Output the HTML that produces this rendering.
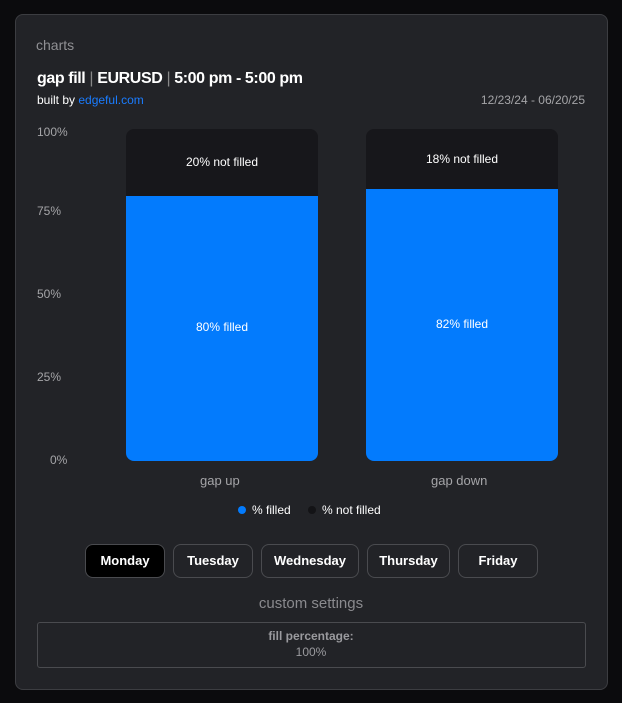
<!DOCTYPE html>
<html><head><style>
*{margin:0;padding:0;box-sizing:border-box}
body{width:622px;height:703px;background:#0b0b0d;font-family:"Liberation Sans",sans-serif;position:relative;overflow:hidden}
.card{position:absolute;left:15px;top:14px;width:593px;height:676px;background:#222327;border:1px solid #3c3d41;border-radius:8px}
.a{position:absolute;white-space:nowrap}
.yl{position:absolute;left:37px;font-size:12px;color:#a5a5a8}
.bar{position:absolute;border-radius:8px;overflow:hidden;background:#17171b}
.bar .b{position:absolute;left:0;right:0;bottom:0;background:#037bfd}
.t{position:absolute;left:0;right:0;text-align:center;color:#fff;font-size:12px}
.btn{position:absolute;top:544px;height:34px;border:1px solid #4a4b4f;border-radius:8px;color:#fff;font-size:13px;font-weight:bold;text-align:center;line-height:32px}
</style></head><body>
<div class="card"></div>
<div class="a" style="left:36px;top:37px;font-size:14px;color:#909094">charts</div>
<div class="a" style="left:37px;top:70px;font-size:16px;font-weight:bold;color:#fff;letter-spacing:-0.4px">gap fill <span style="color:#888;font-weight:normal">|</span> EURUSD <span style="color:#888;font-weight:normal">|</span> 5:00 pm - 5:00 pm</div>
<div class="a" style="left:37px;top:93px;font-size:12px;color:#fff">built by <span style="color:#1a7cff">edgeful.com</span></div>
<div class="a" style="right:37px;top:93px;font-size:12px;color:#a5a5a8">12/23/24 - 06/20/25</div>
<div class="yl" style="top:125px">100%</div>
<div class="yl" style="top:204px">75%</div>
<div class="yl" style="top:287px">50%</div>
<div class="yl" style="top:370px">25%</div>
<div class="yl" style="top:453px;left:50px">0%</div>
<div class="bar" style="left:126px;top:129px;width:192px;height:332px">
 <div class="b" style="top:67px"></div>
 <div class="t" style="top:26px">20% not filled</div>
 <div class="t" style="top:191px">80% filled</div>
</div>
<div class="bar" style="left:366px;top:129px;width:192px;height:332px">
 <div class="b" style="top:60px"></div>
 <div class="t" style="top:23px">18% not filled</div>
 <div class="t" style="top:188px">82% filled</div>
</div>
<div class="a" style="left:200px;top:473px;font-size:13px;color:#a5a5a8">gap up</div>
<div class="a" style="left:431px;top:473px;font-size:13px;color:#a5a5a8">gap down</div>
<div class="a" style="left:238px;top:506px;width:8px;height:8px;border-radius:50%;background:#037bfd"></div>
<div class="a" style="left:252px;top:503px;font-size:12px;color:#fff">% filled</div>
<div class="a" style="left:308px;top:506px;width:8px;height:8px;border-radius:50%;background:#131316"></div>
<div class="a" style="left:322px;top:503px;font-size:12px;color:#fff">% not filled</div>
<div class="btn" style="left:85px;width:80px;background:#000">Monday</div>
<div class="btn" style="left:173px;width:80px">Tuesday</div>
<div class="btn" style="left:261px;width:98px">Wednesday</div>
<div class="btn" style="left:367px;width:83px">Thursday</div>
<div class="btn" style="left:458px;width:80px">Friday</div>
<div class="a" style="left:0;width:622px;text-align:center;top:595px;font-size:15px;color:#8a8a8e">custom settings</div>
<div class="a" style="left:37px;top:622px;width:549px;height:46px;border:1px solid #4a4b4f;border-radius:3px"></div>
<div class="a" style="left:0;width:622px;text-align:center;top:629px;font-size:12px;font-weight:bold;color:#9a9a9e">fill percentage:</div>
<div class="a" style="left:0;width:622px;text-align:center;top:645px;font-size:12px;color:#9a9a9e">100%</div>
</body></html>
